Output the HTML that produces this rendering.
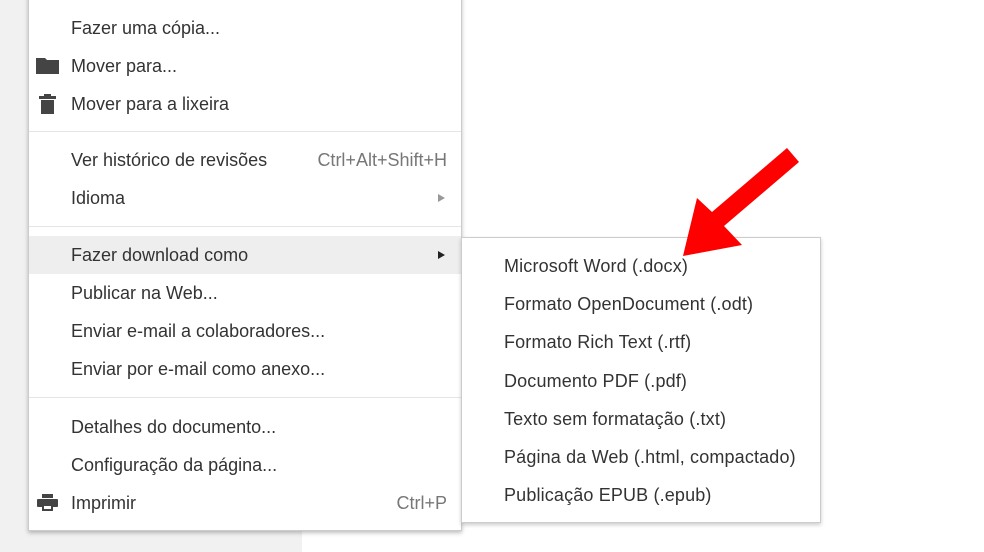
<!DOCTYPE html>
<html><head><style>
body{margin:0;width:984px;height:552px;background:#fff;position:relative;overflow:hidden;font-family:"Liberation Sans",Arial,sans-serif;color:#333;font-size:18px}
.gray{position:absolute;left:0;top:0;width:302px;height:552px;background:#f1f1f1}
.menu{position:absolute;left:28px;top:-10px;width:432px;height:540px;background:#fff;box-shadow:0 2px 4px rgba(0,0,0,.25);border:1px solid #ccc;border-top:none}
.it{position:absolute;left:0;width:432px;height:38px;line-height:38px}
.it span.t{position:absolute;left:42px}
.it span.k{position:absolute;right:14px;color:#777}
.sep{position:absolute;left:0;width:432px;border-top:1px solid #e5e5e5}
.sub{position:absolute;left:461px;top:237px;width:358px;height:284px;background:#fff;border:1px solid #ccc;box-shadow:0 2px 4px rgba(0,0,0,.2)}
.sub div{position:absolute;left:42px;height:38px;line-height:38px;white-space:nowrap;letter-spacing:0.15px}
.tri{position:absolute;right:16px;top:15px;width:0;height:0;border-left:7px solid #999;border-top:4px solid transparent;border-bottom:4px solid transparent}
</style></head><body>
<div class="gray"></div>
<div class="menu">
<div class="it" style="top:19px"><span class="t">Fazer uma cópia...</span></div>
<div class="it" style="top:57px"><svg style="position:absolute;left:7px;top:9px" width="24" height="20"><path d="M0 2h9l2 2h12v14H0z" fill="#444"/></svg><span class="t">Mover para...</span></div>
<div class="it" style="top:95px"><svg style="position:absolute;left:10px;top:9px" width="18" height="20"><rect x="0" y="2" width="17" height="3" fill="#444"/><rect x="5" y="0" width="7" height="3" fill="#444"/><rect x="2" y="6" width="13" height="14" fill="#444"/></svg><span class="t">Mover para a lixeira</span></div>
<div class="sep" style="top:141px"></div>
<div class="it" style="top:151px"><span class="t">Ver histórico de revisões</span><span class="k">Ctrl+Alt+Shift+H</span></div>
<div class="it" style="top:189px"><span class="t">Idioma</span><i class="tri"></i></div>
<div class="sep" style="top:236px"></div>
<div class="it" style="top:246px;background:#eee"><span class="t">Fazer download como</span><i class="tri" style="border-left-color:#222"></i></div>
<div class="it" style="top:284px"><span class="t">Publicar na Web...</span></div>
<div class="it" style="top:322px"><span class="t">Enviar e-mail a colaboradores...</span></div>
<div class="it" style="top:360px"><span class="t">Enviar por e-mail como anexo...</span></div>
<div class="sep" style="top:407px"></div>
<div class="it" style="top:418px"><span class="t">Detalhes do documento...</span></div>
<div class="it" style="top:456px"><span class="t">Configuração da página...</span></div>
<div class="it" style="top:494px"><svg style="position:absolute;left:8px;top:10px" width="22" height="18"><rect x="5" y="0" width="11" height="4" fill="#444"/><rect x="0" y="5" width="21" height="8" rx="1" fill="#444"/><rect x="5" y="11" width="11" height="6" fill="#444"/><rect x="7" y="12" width="7" height="3" fill="#fff"/></svg><span class="t">Imprimir</span><span class="k">Ctrl+P</span></div>
</div>
<div class="sub">
<div style="top:9px">Microsoft Word (.docx)</div>
<div style="top:47px">Formato OpenDocument (.odt)</div>
<div style="top:85px">Formato Rich Text (.rtf)</div>
<div style="top:124px">Documento PDF (.pdf)</div>
<div style="top:162px">Texto sem formatação (.txt)</div>
<div style="top:200px">Página da Web (.html, compactado)</div>
<div style="top:238px">Publicação EPUB (.epub)</div>
</div>
<svg style="position:absolute;left:0;top:0" width="984" height="552"><path d="M683 256 L697 198 L712 212 L787 148 L799 162 L724 226 L742 245 Z" fill="#f00"/></svg>
</body></html>
